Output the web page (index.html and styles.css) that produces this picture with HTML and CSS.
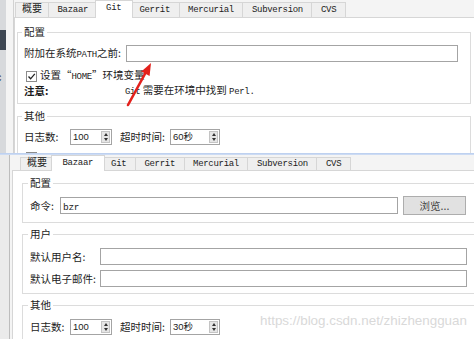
FILE: index.html
```html
<!DOCTYPE html>
<html lang="zh-CN">
<head>
    <meta charset="UTF-8">
    <meta name="viewport" content="width=device-width, initial-scale=1.0">
    <title>版本控制设置</title>
    <link rel="stylesheet" href="styles.css">
</head>
<body>
    <!-- first window: Git page -->
    <div class="shot shot-top">
        <div class="side side-top">
            <div class="side-dark"></div>
            <div class="side-text">rc</div>
        </div>
        <div class="win">
            <div class="tabs">
                <div class="tab tab-cn">概要</div>
                <div class="tab">Bazaar</div>
                <div class="tab active">Git</div>
                <div class="tab">Gerrit</div>
                <div class="tab">Mercurial</div>
                <div class="tab">Subversion</div>
                <div class="tab">CVS</div>
            </div>
            <div class="page">
                <fieldset class="group g-config">
                    <legend>配置</legend>
                    <div class="row row-path">
                        <span class="label path-label">附加在系统<span class="lat">PATH</span>之前:</span>
                        <div class="field path-field"></div>
                    </div>
                    <div class="row row-check">
                        <span class="check"><svg viewBox="0 0 9 9" width="9" height="9"><path d="M1.5 4.5 L3.6 6.8 L7.8 1.8" fill="none" stroke="#222" stroke-width="1.3"/></svg></span>
                        <span class="label">设置“<span class="lat">HOME</span>”环境变量</span>
                    </div>
                    <div class="row row-note">
                        <span class="label note-title">注意:</span>
                        <span class="label"><span class="lat">Git</span> 需要在环境中找到 <span class="lat">Perl.</span></span>
                    </div>
                </fieldset>
                <fieldset class="group g-other">
                    <legend>其他</legend>
                    <div class="row row-spin">
                        <span class="label log-label">日志数:</span>
                        <div class="spin log-spin"><span class="spin-val">100</span><span class="spin-btn"><i class="up"></i><i class="down"></i></span></div>
                        <span class="label time-label">超时时间:</span>
                        <div class="spin time-spin"><span class="spin-val">60秒</span><span class="spin-btn"><i class="up"></i><i class="down"></i></span></div>
                    </div>
                    <div class="row row-check">
                        <span class="check"></span>
                    </div>
                </fieldset>
            </div>
        </div>
    </div>

    <div class="seam"></div>

    <!-- second window: Bazaar page -->
    <div class="shot shot-bottom">
        <div class="side side-bottom"></div>
        <div class="win">
            <div class="tabs">
                <div class="tab tab-cn">概要</div>
                <div class="tab active">Bazaar</div>
                <div class="tab">Git</div>
                <div class="tab">Gerrit</div>
                <div class="tab">Mercurial</div>
                <div class="tab">Subversion</div>
                <div class="tab">CVS</div>
            </div>
            <div class="page">
                <fieldset class="group g-cmd">
                    <legend>配置</legend>
                    <div class="row row-cmd">
                        <span class="label cmd-label">命令:</span>
                        <div class="field cmd-field"><span class="lat">bzr</span></div>
                        <div class="btn">浏览...</div>
                    </div>
                </fieldset>
                <fieldset class="group g-user">
                    <legend>用户</legend>
                    <div class="row row-user">
                        <span class="label user-label">默认用户名:</span>
                        <div class="field user-field"></div>
                    </div>
                    <div class="row row-user row-mail">
                        <span class="label user-label">默认电子邮件:</span>
                        <div class="field user-field"></div>
                    </div>
                </fieldset>
                <fieldset class="group g-other">
                    <legend>其他</legend>
                    <div class="row row-spin">
                        <span class="label log-label">日志数:</span>
                        <div class="spin log-spin"><span class="spin-val">100</span><span class="spin-btn"><i class="up"></i><i class="down"></i></span></div>
                        <span class="label time-label">超时时间:</span>
                        <div class="spin time-spin"><span class="spin-val">30秒</span><span class="spin-btn"><i class="up"></i><i class="down"></i></span></div>
                    </div>
                </fieldset>
            </div>
        </div>
    </div>

    <div class="watermark">https://blog.csdn.net/zhizhengguan</div>

    <svg class="arrow" width="474" height="339" viewBox="0 0 474 339">
        <line x1="128" y1="105" x2="146" y2="72" stroke="#e3211c" stroke-width="2.6" stroke-linecap="round"/>
        <polygon points="151,63 149.6,76 141.4,71.6" fill="#e3211c"/>
    </svg>
</body>
</html>
```

FILE: styles.css
```css
* {
    box-sizing: border-box;
}

body {
    margin: 0;
    width: 474px;
    height: 339px;
    overflow: hidden;
    position: relative;
    background: #fff;
    font-family: "Noto Sans CJK SC", sans-serif;
    font-size: 10.5px;
    color: #1c1c1c;
}

.shot {
    display: flex;
    overflow: hidden;
}
.shot-top {
    height: 153px;
}
.shot-bottom {
    height: 184px;
}
.seam {
    height: 2px;
    background: linear-gradient(#b7ccee, #d3e0f5);
}

/* strips of the windows behind */
.side {
    flex: none;
    overflow: hidden;
}
.side-top {
    width: 14px;
    background: linear-gradient(to right, #d7d9dc 0 6px, #f4f4f4 6px 13px, #d2d2d2 13px);
}
.side-dark {
    margin-top: 30px;
    width: 6px;
    height: 20px;
    background: #3e4753;
}
.side-text {
    margin-top: 22px;
    margin-left: -7px;
    font-family: "Liberation Sans", sans-serif;
    font-size: 10px;
    line-height: 12px;
}
.side-bottom {
    width: 12px;
    background: linear-gradient(to right, #ebebeb 0 9px, #bdbdbd 9px 10px, #f4f4f4 10px);
}

.win {
    flex: 1;
    display: flex;
    flex-direction: column;
    background: #f4f4f4;
    min-width: 0;
}

/* tab strip */
.tabs {
    display: flex;
    align-items: flex-end;
    height: 18px;
    padding-left: 1px;
}
.shot-bottom .tabs {
    height: 15px;
    padding-left: 8px;
}
.tab {
    position: relative;
    height: 15px;
    padding: 0 8.5px;
    margin-right: -1px;
    border: 1px solid #d6d6d6;
    border-bottom: none;
    background: #efefef;
    font-family: "Liberation Mono", "Noto Sans CJK SC", monospace;
    font-size: 9px;
    letter-spacing: -0.3px;
    line-height: 14px;
    white-space: nowrap;
}
.shot-bottom .tab {
    height: 13px;
    line-height: 12px;
}
.tab-cn {
    padding: 0 6px;
    font-size: 10px;
    letter-spacing: 0;
}
.tab.active {
    z-index: 1;
    height: 18px;
    padding: 0 10.5px;
    margin: 0 -3px -1px -2px;
    background: #fff;
    line-height: 15px;
}
.shot-bottom .tab.active {
    height: 16px;
    line-height: 14px;
}

.page {
    flex: 1;
    background: #fff;
    border-top: 1px solid #d6d6d6;
    border-left: 1px solid #d6d6d6;
    padding-top: 8px;
}
.shot-bottom .page {
    padding-top: 6px;
}

/* group boxes */
.group {
    margin: 0 3px 0 2px;
    padding: 7px 6px 5px;
    border: 1px solid #dcdcdc;
    min-width: 0;
}
.group legend {
    padding: 0 2px;
    margin-left: -2px;
    font-size: 10.5px;
    line-height: 12px;
}
.g-other {
    margin-top: 6px;
}
.shot-bottom .group {
    margin: 0 -12px 0 9px;
    padding: 8px 7px 6px;
}
.shot-bottom .g-cmd {
    padding-top: 7px;
    padding-bottom: 7px;
}
.shot-bottom .g-user,
.shot-bottom .g-other {
    margin-top: 5px;
}

.row {
    display: flex;
    align-items: center;
}
.label {
    flex: none;
    line-height: 14px;
    white-space: nowrap;
}
.lat {
    font-family: "Liberation Mono", monospace;
    font-size: 9px;
    letter-spacing: -0.3px;
}

.field {
    height: 17px;
    border: 1px solid #a4a4a4;
    background: #fff;
    padding-left: 2px;
    line-height: 15px;
}
.field .lat {
    font-size: 9.5px;
}

/* git page rows */
.row-path {
    height: 17px;
}
.path-label {
    width: 102px;
}
.path-field {
    flex: 1;
    margin-right: 6px;
}
.row-check {
    height: 14px;
    margin-top: 7px;
}
.check {
    display: flex;
    align-items: center;
    justify-content: center;
    width: 11px;
    height: 11px;
    margin: 0 3px 0 2px;
    border: 1px solid #8c8c8c;
    background: #fff;
}
.row-note {
    height: 14px;
    margin-top: 1px;
}
.note-title {
    width: 101px;
    font-weight: bold;
}
.g-other .row-check {
    margin-top: 5px;
}

/* spin boxes */
.row-spin {
    height: 16px;
}
.log-label {
    width: 46px;
}
.time-label {
    width: 50px;
}
.spin {
    display: flex;
    height: 16px;
    border: 1px solid #a4a4a4;
    background: #fff;
}
.log-spin {
    width: 42px;
    margin-right: 8px;
}
.time-spin {
    width: 50px;
}
.spin-val {
    flex: 1;
    padding-left: 2px;
    font-family: "Liberation Sans", "Noto Sans CJK SC", sans-serif;
    font-size: 9.5px;
    line-height: 14px;
}
.spin-btn {
    display: flex;
    flex-direction: column;
    align-items: center;
    justify-content: center;
    gap: 2px;
    width: 9px;
    margin: 1px 1px 1px 0;
    background: #e6e6e6;
    border: 1px solid #c4c4c4;
}
.spin-btn i {
    width: 0;
    height: 0;
    border-left: 2.5px solid transparent;
    border-right: 2.5px solid transparent;
}
.spin-btn .up {
    border-bottom: 3px solid #333;
}
.spin-btn .down {
    border-top: 3px solid #333;
}

/* bazaar page rows */
.row-cmd {
    height: 19px;
}
.cmd-label {
    width: 30px;
}
.cmd-field {
    width: 338px;
}
.btn {
    width: 63px;
    height: 19px;
    margin-left: 5px;
    border: 1px solid #adadad;
    background: #e1e1e1;
    color: #444;
    text-align: center;
    line-height: 17px;
}
.row-user {
    height: 17px;
}
.row-mail {
    margin-top: 5px;
}
.user-label {
    width: 70px;
}
.user-field {
    flex: 1;
    margin-right: 11px;
}
.shot-bottom .log-label {
    width: 40px;
}

.watermark {
    position: absolute;
    left: 260px;
    top: 312px;
    font-family: "Liberation Sans", sans-serif;
    font-size: 13.4px;
    line-height: 18px;
    color: #d9d9d9;
}

.arrow {
    position: absolute;
    left: 0;
    top: 0;
    pointer-events: none;
}
```
